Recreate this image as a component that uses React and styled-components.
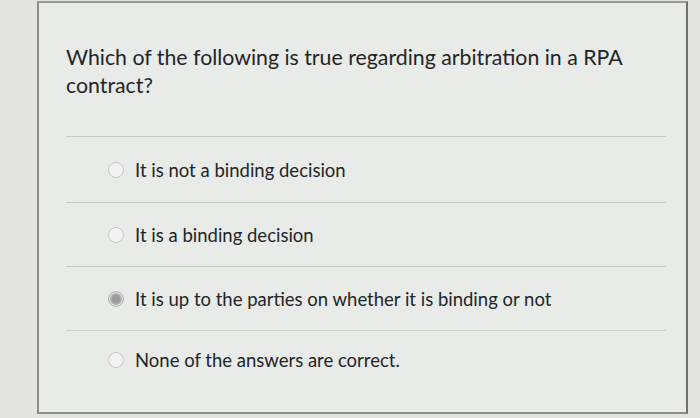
import React from "react"
import styled, { createGlobalStyle } from "styled-components"

const answers = [
  { id: "a1", text: "It is not a binding decision" },
  { id: "a2", text: "It is a binding decision" },
  { id: "a3", text: "It is up to the parties on whether it is binding or not", checked: true },
  { id: "a4", text: "None of the answers are correct." },
]

export default () => {
  return (
    <>
      <GlobalStyle />
      <Page>
        <QuestionCard>
          <QuestionText>
            Which of the following is true regarding arbitration in a RPA contract?
          </QuestionText>
          <AnswerList>
            {answers.map(({ id, text, checked }) => (
              <AnswerRow key={id}>
                <Radio checked={checked} />
                <AnswerLabel>{text}</AnswerLabel>
              </AnswerRow>
            ))}
          </AnswerList>
        </QuestionCard>
      </Page>
    </>
  )
}

const GlobalStyle = createGlobalStyle`
  html, body {
    margin: 0;
    padding: 0;
    background: #e3e4e2;
  }
  body {
    font-family: Lato, "Open Sans", sans-serif;
    color: #222527;
  }
`

const Page = styled.div`
  width: 700px;
  height: 418px;
  overflow: hidden;
  padding: 1px 0 0 37px;
  box-sizing: border-box;
`

const QuestionCard = styled.div`
  width: 651px;
  height: 413px;
  box-sizing: border-box;
  background: #e9ebe9;
  border: 2px solid #8a8b8a;
  border-top-color: #9a9b9a;
  border-right-color: #6f706f;
  padding: 40px 20px 0 27px;
`

const QuestionText = styled.div`
  font-size: 21.3px;
  line-height: 28px;
  width: 580px;
  margin-bottom: 37px;
`

const AnswerList = styled.ul`
  list-style: none;
  margin: 0;
  padding: 0;
`

const AnswerRow = styled.li`
  display: flex;
  align-items: center;
  height: 63px;
  border-top: 1px solid #c9cbc9;
  padding-left: 42px;
  &:first-child {
    height: 65px;
  }
  &:last-child {
    border-top-color: #d0d2d0;
    height: 58px;
  }
`

const Radio = styled.span`
  flex: none;
  width: 16px;
  height: 16px;
  border-radius: 50%;
  box-sizing: border-box;
  border: 1.5px solid ${p => (p.checked ? "#b4b5b4" : "#c6c7c6")};
  background: ${p =>
    p.checked
      ? "radial-gradient(circle, #999a99 0 4px, #aeafae 4.5px 5.5px, #dadbda 6px)"
      : "#f1f2f1"};
  margin-right: 11px;
`

const AnswerLabel = styled.span`
  font-size: 18.5px;
  line-height: 24px;
`
